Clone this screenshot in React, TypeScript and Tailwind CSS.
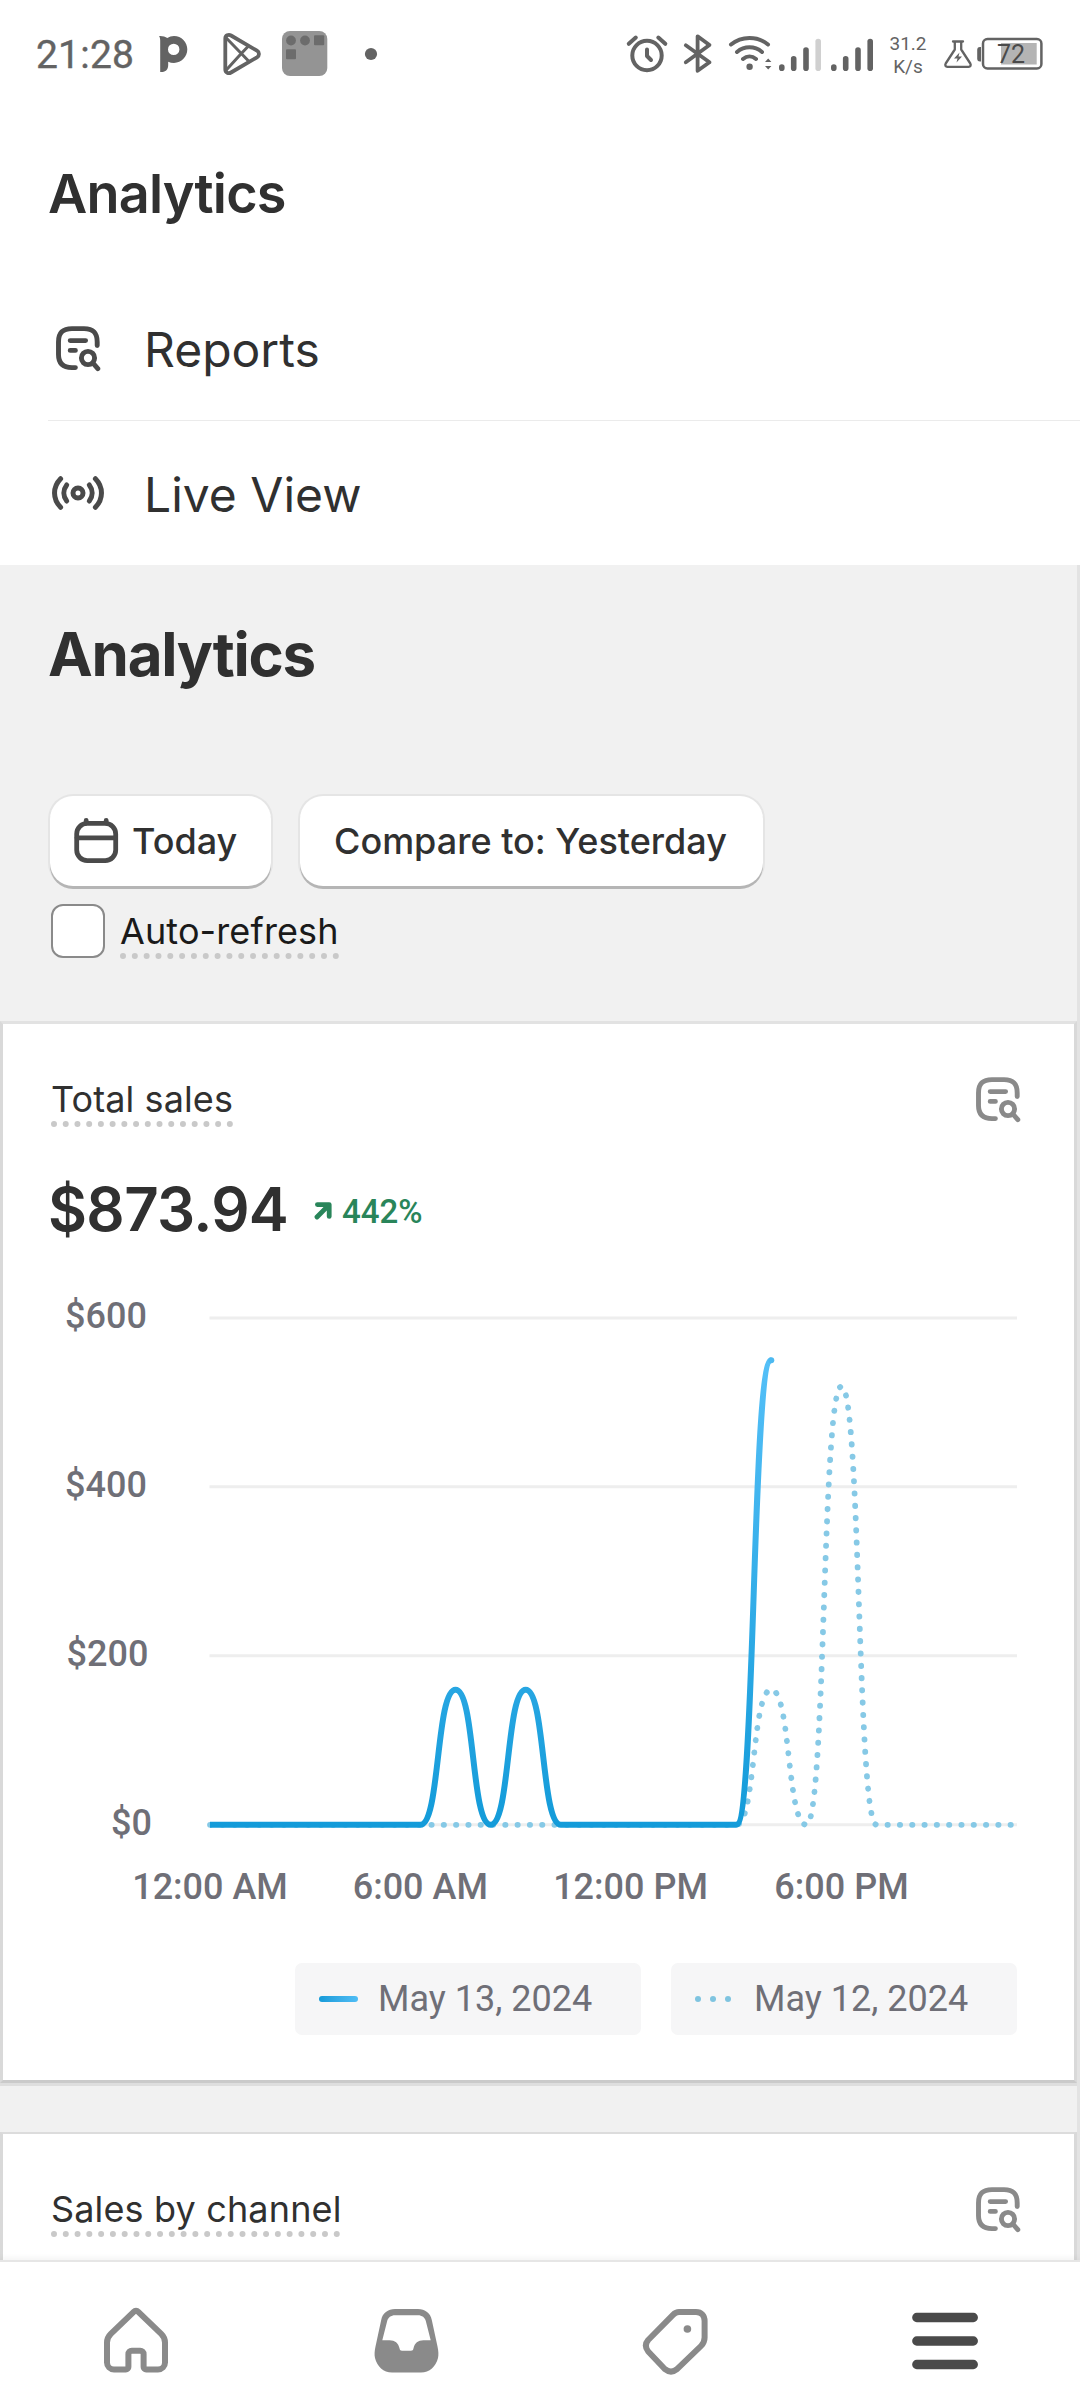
import React from "react";

const px = (hour: number) => 210 + hour * 35.08;
const py = (value: number) => 1824.8 - value * 0.8447;

/** Rounded-step curve: every segment leaves and arrives horizontally. */
function curve(values: number[]) {
  let d = `M${px(0)} ${py(values[0])}`;
  for (let i = 1; i < values.length; i++) {
    const x0 = px(i - 1);
    const x1 = px(i);
    const y0 = py(values[i - 1]);
    const y1 = py(values[i]);
    const k = (x1 - x0) * 0.56;
    d += y0 === y1 ? `L${x1} ${y1}` : `C${x0 + k} ${y0} ${x1 - k} ${y1} ${x1} ${y1}`;
  }
  return d;
}

const today = [0, 0, 0, 0, 0, 0, 0, 160, 0, 160, 0, 0, 0, 0, 0, 0, 550];
const yesterday = [0, 0, 0, 0, 0, 0, 0, 0, 0, 0, 0, 0, 0, 0, 0, 0, 160, 0, 519, 0, 0, 0, 0, 0];

function ReportIcon({ className }: { className: string }) {
  return (
    <svg
      width="46"
      height="46"
      viewBox="0 0 46 46"
      fill="none"
      stroke="currentColor"
      strokeWidth="4.9"
      strokeLinecap="round"
      className={className}
    >
      <path d="M41.2 19.5V16C41.2 6.8 37.2 2.6 28 2.6H16C6.8 2.6 2.5 6.8 2.5 16V28.5C2.5 37.4 6.8 41.6 16 41.6H19.4" />
      <path d="M14.2 14.6H29.6M14.2 24.4H19.4" />
      <circle cx="32" cy="32" r="6.6" />
      <path d="M37 37.2L41.8 42.6" />
    </svg>
  );
}

function Dotted({ children, className }: { children: string; className: string }) {
  return (
    <span
      className={`block whitespace-nowrap border-b-[6px] border-dotted border-[#c9c9c9] text-[36px] leading-[44px] ${className}`}
    >
      {children}
    </span>
  );
}

function Signal({ weak }: { weak?: boolean }) {
  return (
    <svg width="52" height="50" viewBox="774.5 30 52 50" strokeWidth="5.6" strokeLinecap="round" stroke="#636363">
      <path d="M782.3 67V68.2M794.2 58.8V68.2M806.5 50V68.2" />
      <path d="M818.7 41.5V68.2" stroke={weak ? "#d0d0d0" : "#636363"} />
    </svg>
  );
}

function StatusBar() {
  return (
    <div className="flex h-[110px] shrink-0 items-center font-['Roboto',sans-serif] text-[#636363]">
      <span className="ml-9 w-[120px] text-[39px] leading-none tracking-[0.2px] [-webkit-text-stroke:0.4px_#636363]">21:28</span>
      <svg width="36" height="50" viewBox="156 30 36 50" fill="#636363">
        <path
          fillRule="evenodd"
          d="M159 36C162 35.7 165.3 36.6 167.3 38C169.4 36.6 171.5 35.9 174 35.9C181.5 35.9 187.3 41.9 187.3 49.3C187.3 56.8 181.5 62.9 174 62.9C171.8 62.9 169.9 62.5 168.2 61.7V65C168.2 69.5 165.7 72 161.4 72H160.2V40.5C160.2 38.5 159.8 37 159 36ZM173.7 43.7A5.7 5.7 0 1 0 173.7 55.1A5.7 5.7 0 1 0 173.7 43.7Z"
        />
      </svg>
      <svg width="80" height="50" viewBox="192 30 80 50" fill="none" stroke="#636363" strokeWidth="3.8" strokeLinejoin="round">
        <path d="M225.3 38.5V69.5C225.3 72.5 228.5 74 231 72.5L257 57.3C259.6 55.7 259.6 52.2 257 50.7L231 35.5C228.5 34 225.3 35.5 225.3 38.5Z" />
        <path d="M225.8 37.5L241.3 53.5L249.5 62M225.8 70.5L241.3 53.5L249 45.5" strokeWidth="3" />
      </svg>
      <svg width="70" height="50" viewBox="272 30 70 50">
        <rect x="282" y="31" width="45.3" height="45" rx="8" fill="#949494" />
        <g fill="#6c6c6c">
          <circle cx="291" cy="40.5" r="4.9" />
          <circle cx="305" cy="40.5" r="4.9" />
          <rect x="314" y="35.2" width="10.2" height="10" rx="1" />
          <rect x="286" y="49.3" width="10" height="10" rx="1" />
        </g>
      </svg>
      <svg width="50" height="50" viewBox="342 30 50 50">
        <circle cx="371" cy="54" r="6.1" fill="#636363" />
      </svg>

      <svg width="56" height="50" viewBox="620 30 56 50" className="ml-[228px]" fill="none" stroke="#636363" strokeWidth="4" strokeLinecap="round">
        <circle cx="647" cy="55.5" r="14.7" />
        <path d="M647 49.5V56L651 60" strokeLinejoin="round" />
        <path d="M628.8 43.8L635.8 37.5M665.3 43.8L658.3 37.5" />
      </svg>
      <svg width="44" height="50" viewBox="676 30 44 50" fill="none" stroke="#636363" strokeWidth="3.8" strokeLinecap="round" strokeLinejoin="round">
        <path d="M685.8 45.3L709.5 62.3L697.6 70.8V36.3L709.5 45L685.8 62.3" />
      </svg>
      <svg width="54" height="50" viewBox="720 30 54 50" fill="none" stroke="#636363" strokeWidth="4" strokeLinecap="round">
        <path d="M731 44.5C741.5 35.7 757.5 35.7 768 44.5M737 52C744.5 45.8 754.5 45.8 762 52M743 59C747 55.5 752 55.5 756 59" />
        <circle cx="749.6" cy="66.8" r="3.2" fill="#636363" stroke="none" />
        <path d="M765 62L768.2 58.5L771.4 62ZM765 66L768.2 69.5L771.4 66Z" fill="#636363" stroke="none" />
      </svg>
      <Signal weak />
      <Signal />
      <div className="w-[60px] text-center text-[19px] leading-[23px]">
        <div>31.2</div>
        <div>K/s</div>
      </div>
      <svg width="38" height="50" viewBox="938 30 38 50" fill="none" stroke="#636363" strokeWidth="2.3" strokeLinecap="round" strokeLinejoin="round">
        <path d="M953 41.5H963M954.8 42V49.5L945.7 63.5C944.7 65.5 945.7 66.8 947.3 66.8H968.7C970.3 66.8 971.3 65.5 970.3 63.5L961.2 49.5V42" />
        <path d="M959.5 52.5L954 58.5H957.5L956.5 62.5L962 56.5H958.5Z" fill="#636363" stroke="none" />
      </svg>
      <svg width="70" height="50" viewBox="976 30 70 50">
        <path d="M981 47V61.5H980C978 61.5 977.2 60.5 977.2 58.5V50C977.2 48 978 47 980 47Z" fill="#636363" />
        <rect x="983" y="39" width="58.4" height="29.5" rx="4.5" fill="none" stroke="#636363" strokeWidth="2.5" />
        <rect x="1001" y="43" width="35.7" height="21.5" fill="#b4b4b4" />
        <text x="997" y="62.8" fontSize="25" textLength="28" fontFamily="Roboto, sans-serif" fill="#4a4a4a">72</text>
      </svg>
    </div>
  );
}

function Chart() {
  return (
    <svg width="1071" height="690" viewBox="3 1239 1071 690" className="block" fontFamily="Roboto, sans-serif" fontSize="36" fontWeight="500" fill="#6f6f77">
      <defs>
        <linearGradient id="sales" gradientUnits="userSpaceOnUse" x1="0" y1="1828" x2="0" y2="1355">
          <stop offset="0" stopColor="#139bd9" />
          <stop offset="1" stopColor="#55c0f8" />
        </linearGradient>
      </defs>
      <path d="M209.5 1318H1017M209.5 1486.8H1017M209.5 1655.7H1017M209.5 1824.8H1017" stroke="#eeeeee" strokeWidth="3" />
      <text x="65" y="1328">$600</text>
      <text x="65" y="1497">$400</text>
      <text x="66.5" y="1666">$200</text>
      <text x="111" y="1834.7">$0</text>
      <path d={curve(yesterday)} fill="none" stroke="#86c9e6" strokeWidth="5.8" strokeLinecap="round" strokeDasharray="0.3 12" />
      <path d={curve(today)} fill="none" stroke="url(#sales)" strokeWidth="6" />
      <circle cx={px(16)} cy={py(550)} r="3" fill="#4db9f0" />
      <g textAnchor="middle">
        <text x="210" y="1898.7">12:00 AM</text>
        <text x="420.3" y="1898.7">6:00 AM</text>
        <text x="630.5" y="1898.7">12:00 PM</text>
        <text x="841.5" y="1898.7">6:00 PM</text>
      </g>
    </svg>
  );
}

function Legend({ label, dotted }: { label: string; dotted?: boolean }) {
  return (
    <div className="flex h-[72px] w-[346px] items-center gap-5 rounded-[7px] bg-[#f6f6f7] pl-6 font-['Roboto',sans-serif] text-[36px] leading-none text-[#6f6f77]">
      {dotted ? (
        <svg width="39" height="6" viewBox="0 0 39 6" fill="#7fc4e0">
          <circle cx="3" cy="3" r="3" />
          <circle cx="18" cy="3" r="3" />
          <circle cx="33" cy="3" r="3" />
        </svg>
      ) : (
        <span className="h-1.5 w-[39px] rounded-full bg-gradient-to-r from-[#139bd9] to-[#4fbdf5]" />
      )}
      <span>{label}</span>
    </div>
  );
}

export default function App() {
  return (
    <div className="flex h-[2408px] w-[1080px] flex-col overflow-hidden bg-white font-['Inter',sans-serif] text-[#303030]">
      <StatusBar />

      <h1 className="mt-[57px] shrink-0 pl-12 text-[54px] font-semibold leading-[54px] tracking-[-0.8px]">Analytics</h1>
      <div className="mt-[56px] flex h-[143px] shrink-0 items-center pl-14">
        <ReportIcon className="text-[#4a4a4a]" />
        <span className="ml-[42px] pt-0.5 text-[48px] leading-none">Reports</span>
      </div>
      <div className="ml-12 h-px shrink-0 bg-[#ebebeb]" />
      <div className="flex h-[144px] shrink-0 items-center pl-[51px]">
        <svg width="54" height="40" viewBox="51 473 54 40" fill="none" stroke="#4a4a4a" strokeWidth="5" strokeLinecap="round">
          <circle cx="78" cy="493" r="5" />
          <path d="M66.7 485C62.9 490 62.9 496 66.7 501M89.3 485C93.1 490 93.1 496 89.3 501" />
          <path d="M60.6 478.7C52.5 487 52.5 499 60.6 507.3M95.4 478.7C103.5 487 103.5 499 95.4 507.3" />
        </svg>
        <span className="ml-[39px] pt-[3px] text-[48px] leading-none">Live View</span>
      </div>

      <main className="h-[1695px] shrink-0 overflow-hidden border-r-[3px] border-[#e3e3e3] bg-[#f1f1f1]">
        <div className="h-[456px] pl-12 pt-[59px]">
          <h2 className="text-[60px] font-bold leading-[60px] tracking-[-1.25px]">Analytics</h2>
          <div className="ml-0.5 mt-[112px] flex gap-[29px] text-[36px] font-medium leading-none">
            <div className="flex h-[90px] w-[221px] items-center rounded-[23px] bg-white pl-6 shadow-[0_3px_0_0_#b5b5b5,0_0_0_2px_#e5e5e5]">
              <svg width="45" height="46" viewBox="74 817 45 46" fill="none" stroke="#4a4a4a" strokeWidth="4.8" strokeLinecap="round">
                <rect x="76.7" y="822.4" width="39" height="37.2" rx="10.5" />
                <path d="M77 836.8H115.5M86.2 819.4V822M106.2 819.4V822" />
              </svg>
              <span className="ml-[13px]">Today</span>
            </div>
            <div className="flex h-[90px] w-[463px] items-center rounded-[23px] bg-white pl-[34px] shadow-[0_3px_0_0_#b5b5b5,0_0_0_2px_#e5e5e5]">
              <span className="whitespace-nowrap">Compare to: Yesterday</span>
            </div>
          </div>
          <div className="ml-[3px] mt-[17px] flex gap-[15px]">
            <span className="mt-px h-[54px] w-[54px] rounded-xl border-2 border-[#8a8a8a] bg-white" />
            <Dotted className="mt-1.5 h-[50px] w-[219px] tracking-[0.12px] text-[#1a1a1a]">Auto-refresh</Dotted>
          </div>
        </div>

        <section className="h-[1062px] border-[3px] border-x-[#d9d9d9] border-b-[#cacaca] border-t-[#e2e2e2] bg-white shadow-[0_3px_0_0_#dedede]">
          <header className="flex justify-between pl-12 pr-[52px] pt-[53px]">
            <Dotted className="h-[50px] w-[182px] tracking-[0.1px]">Total sales</Dotted>
            <ReportIcon className="text-[#8a8a8a]" />
          </header>
          <div className="mt-[52px] flex h-[60px] items-center pl-[45px]">
            <span className="w-[266px] text-[60px] font-semibold leading-none tracking-[-0.65px]">$873.94</span>
            <svg width="18" height="18" viewBox="0 0 18 18" fill="none" stroke="#29855a" strokeWidth="4.8" strokeLinecap="round" strokeLinejoin="round" className="mt-[3px]">
              <path d="M3.4 2.6H15.2V14.4M15 2.9L3 15" />
            </svg>
            <span className="ml-2.5 pt-[4px] font-['Roboto',sans-serif] text-[33px] font-medium leading-none text-[#29855a]">442%</span>
          </div>
          <Chart />
          <div className="mt-[34px] flex justify-end gap-[30px] pr-[57px]">
            <Legend label="May 13, 2024" />
            <Legend label="May 12, 2024" dotted />
          </div>
        </section>

        <section className="mt-[49px] h-[200px] border-[3px] border-t-2 border-x-[#d9d9d9] border-t-[#dcdcdc] bg-white">
          <header className="flex justify-between pl-12 pr-[52px] pt-[53px]">
            <Dotted className="h-[50px] w-[289px] tracking-[0.15px]">Sales by channel</Dotted>
            <ReportIcon className="text-[#8a8a8a]" />
          </header>
        </section>
      </main>

      <nav className="relative grid h-[148px] shrink-0 grid-cols-4 justify-items-center border-t-2 border-[#e6e6e6] bg-white pt-[45px] shadow-[0_-2px_6px_rgba(0,0,0,0.05)]">
        <svg width="68" height="68" viewBox="-3 -0.5 68 68" fill="none" stroke="#8a8a8a" strokeWidth="6" strokeLinejoin="round">
          <path d="M29.7 4.3A3.3 3.3 0 0 1 34.3 4.3L57.2 26.3Q61 30 61 35V55A7 7 0 0 1 54 62H42.2A2.6 2.6 0 0 1 39.6 59.4V46.6A3.4 3.4 0 0 0 36.2 43.2H27.8A3.4 3.4 0 0 0 24.4 46.6V59.4A2.6 2.6 0 0 1 21.8 62H10A7 7 0 0 1 3 55V35Q3 30 6.8 26.3Z" />
        </svg>
        <svg width="68" height="68" viewBox="-3.5 -2 68 68" fill="#8a8a8a">
          <path
            fillRule="evenodd"
            d="M20.5 0H43.5C50.5 0 56 4 57.3 11L63 37.5C64 42 64.2 46 63.5 49C61.5 57.5 55 63.5 46.5 63.5H17.5C9 63.5 2.5 57.5 .5 49C-.2 46 0 42 1 37.5L6.7 11C8 4 13.5 0 20.5 0ZM20.5 6.2C16.5 6.2 13.5 8.5 12.7 12L7.8 31.2H15C20.5 31.2 23.8 34 25 39.2C25.4 41 26 41.7 27.5 41.7H36.5C38 41.7 38.6 41 39 39.2C40.2 34 43.5 31.2 49 31.2H56.2L51.3 12C50.5 8.5 47.5 6.2 43.5 6.2Z"
          />
        </svg>
        <svg width="68" height="68" viewBox="-2 -2 68 68" fill="none" stroke="#8a8a8a" strokeWidth="6" strokeLinejoin="round">
          <path d="M36 3H53C58.5 3 61.6 6.5 61.6 12V28.5C61.6 32 60.5 34.5 58 37L34 60.2Q28 65 22 60.2L5.2 42.5Q.5 36.5 5.2 31L30 5.8Q32.8 3 36 3Z" />
          <circle cx="44.4" cy="20" r="3.8" fill="#8a8a8a" stroke="none" />
        </svg>
        <svg width="68" height="68" viewBox="911 2307 68 68" stroke="#4a4a4a" strokeWidth="9.3" strokeLinecap="round">
          <path d="M916.8 2317.5H973.3M916.8 2341H973.3M916.8 2364.5H973.3" />
        </svg>
      </nav>
    </div>
  );
}
